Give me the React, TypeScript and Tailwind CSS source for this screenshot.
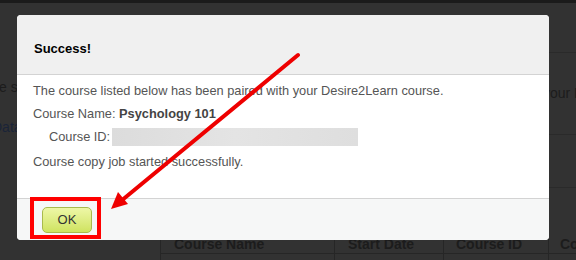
export default function App() {
  return (
    <div className="relative h-[260px] w-[576px] overflow-hidden bg-[#323232] font-['Liberation_Sans',Arial,sans-serif]">
      {/* dimmed page behind the dialog */}
      <div className="h-[3px] bg-[#1b1b1b]" />
      <div className="flex h-[257px]">
        <div className="w-[160px] shrink-0 overflow-hidden text-[14px] text-[#1c1c1c]">
          <p className="ml-[-1px] mt-[74px] whitespace-nowrap">e selected course</p>
          <p className="ml-[-8px] mt-[19px] whitespace-nowrap text-[#1a2438]">Data</p>
        </div>
        <div className="flex min-w-0 flex-1 flex-col overflow-hidden">
          <div className="h-[50px] border-b border-[#2a2a2a]" />
          <div className="flex h-[82px] items-center border-b border-[#2a2a2a] whitespace-nowrap text-[14px] text-[#1c1c1c]">
            <span className="ml-[383px]">your Desire2Learn</span>
          </div>
          <div className="h-[53px] border-b border-[#2a2a2a]" />
          <div className="h-[47px]" />
          <div className="flex h-[18px] border-l border-[#262626] text-[14px] font-bold text-[#1c1c1c] whitespace-nowrap">
            <div className="w-[174px] shrink-0 border-r border-[#262626] pl-[13px] leading-[18px]">Course Name</div>
            <div className="w-[109px] shrink-0 border-r border-[#262626] pl-[13px] leading-[18px]">Start Date</div>
            <div className="w-[105px] shrink-0 border-r border-[#262626] pl-[12px] leading-[18px]">Course ID</div>
            <div className="pl-[11px] leading-[18px]">Course</div>
          </div>
          <div className="flex flex-1 border-l border-t border-[#262626]">
            <div className="w-[174px] shrink-0 border-r border-[#262626]" />
            <div className="w-[109px] shrink-0 border-r border-[#262626]" />
            <div className="w-[105px] shrink-0 border-r border-[#262626]" />
          </div>
        </div>
      </div>

      {/* dialog */}
      <div className="absolute left-[17px] top-[15px] flex h-[225px] w-[532px] flex-col overflow-hidden rounded-[4px] bg-white">
        <div className="h-[60px] shrink-0 border-b border-[#d3d3d3] bg-[#f0f0f0] pl-[17px] pt-[26px]">
          <h2 className="text-[13px] font-bold leading-[16px] text-black">Success!</h2>
        </div>
        <div className="flex-1 pl-[16px] pt-[4px] text-[12.8px] leading-[23px] text-[#555]">
          <p>The course listed below has been paired with your Desire2Learn course.</p>
          <p>
            Course Name: <span className="font-bold text-[#444]">Psychology 101</span>
          </p>
          <div className="flex h-[23px] items-center pl-[16px]">
            <span>Course ID:</span>
            <div className="ml-[2px] h-[18px] w-[246px] bg-gradient-to-r from-[#dcdcdc] via-[#e4e4e4] to-[#dedede]" />
          </div>
          <p className="mt-[2px]">Course copy job started successfully.</p>
        </div>
        <div className="h-[42px] shrink-0 border-t border-[#d3d3d3] bg-[#f6f7f7] pl-[25px] pt-[8px]">
          <button className="h-[26px] w-[50px] rounded-[5px] border border-[#a9bb4c] bg-gradient-to-b from-[#eef7a6] to-[#cfe35f] text-[13px] text-[#333]">
            OK
          </button>
        </div>
      </div>

      {/* annotation */}
      <div className="absolute left-[30px] top-[197px] h-[42px] w-[71px] border-4 border-[#ff0000]" />
      <svg className="pointer-events-none absolute left-0 top-0" width="576" height="260" viewBox="0 0 576 260">
        <line x1="298" y1="55" x2="121" y2="201" stroke="#ee0000" strokeWidth="4" strokeLinecap="round" />
        <polygon points="111,209 118,192 128,204" fill="#ee0000" />
      </svg>
    </div>
  )
}
